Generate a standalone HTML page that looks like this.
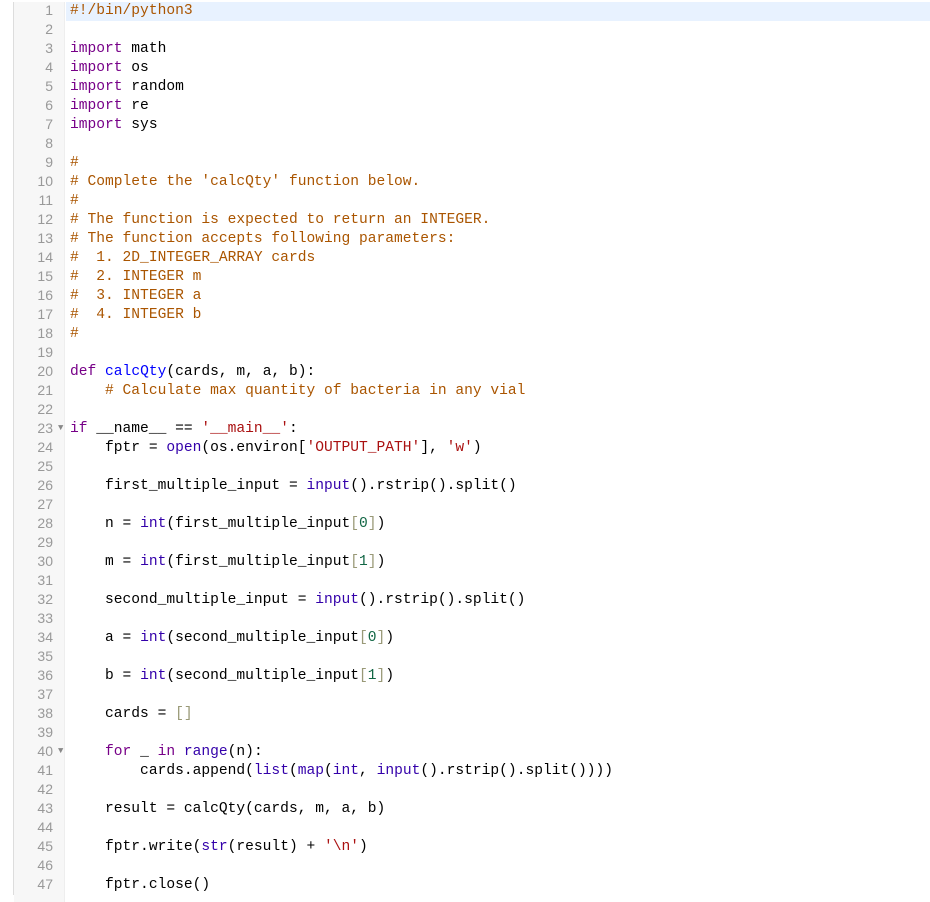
<!DOCTYPE html>
<html><head><style>
html,body{margin:0;padding:0;background:#fff;width:930px;height:899px;overflow:hidden}
.ed{position:absolute;left:13px;top:2px;right:0;border-left:1px solid #ddd}
.g{position:absolute;left:0;top:0;width:50px;background:#f7f7f7;height:900px;border-right:1px solid #eee}
.l{height:19px;line-height:19px;font-family:"Liberation Mono",monospace;font-size:14.6px;white-space:pre;position:relative}
.n{position:absolute;left:0;top:-1px;width:39px;text-align:right;color:#999;font-family:"Liberation Sans",sans-serif;font-size:14px;line-height:19px}
.c{position:absolute;left:56px;color:#000}
.hl{background:#e8f2ff;position:absolute;left:52px;right:0;top:0;height:19px}
.k{color:#708}.cm{color:#a50}.b{color:#30a}.d{color:#00f}.s{color:#a11}.nu{color:#164}.br{color:#997}
.ar{position:absolute;left:44px;top:-1px;color:#888;font-size:9px}
</style></head><body>
<div class="ed"><div class="g"></div>
<div class="l"><div class="hl"></div><span class="n">1</span><span class="c"><span class="cm">#!/bin/python3</span></span></div>
<div class="l"><span class="n">2</span></div>
<div class="l"><span class="n">3</span><span class="c"><span class="k">import</span> math</span></div>
<div class="l"><span class="n">4</span><span class="c"><span class="k">import</span> os</span></div>
<div class="l"><span class="n">5</span><span class="c"><span class="k">import</span> random</span></div>
<div class="l"><span class="n">6</span><span class="c"><span class="k">import</span> re</span></div>
<div class="l"><span class="n">7</span><span class="c"><span class="k">import</span> sys</span></div>
<div class="l"><span class="n">8</span></div>
<div class="l"><span class="n">9</span><span class="c cm">#</span></div>
<div class="l"><span class="n">10</span><span class="c cm"># Complete the 'calcQty' function below.</span></div>
<div class="l"><span class="n">11</span><span class="c cm">#</span></div>
<div class="l"><span class="n">12</span><span class="c cm"># The function is expected to return an INTEGER.</span></div>
<div class="l"><span class="n">13</span><span class="c cm"># The function accepts following parameters:</span></div>
<div class="l"><span class="n">14</span><span class="c cm">#  1. 2D_INTEGER_ARRAY cards</span></div>
<div class="l"><span class="n">15</span><span class="c cm">#  2. INTEGER m</span></div>
<div class="l"><span class="n">16</span><span class="c cm">#  3. INTEGER a</span></div>
<div class="l"><span class="n">17</span><span class="c cm">#  4. INTEGER b</span></div>
<div class="l"><span class="n">18</span><span class="c cm">#</span></div>
<div class="l"><span class="n">19</span></div>
<div class="l"><span class="n">20</span><span class="c"><span class="k">def</span> <span class="d">calcQty</span>(cards, m, a, b):</span></div>
<div class="l"><span class="n">21</span><span class="c">    <span class="cm"># Calculate max quantity of bacteria in any vial</span></span></div>
<div class="l"><span class="n">22</span></div>
<div class="l"><span class="n">23</span><span class="ar">▼</span><span class="c"><span class="k">if</span> __name__ == <span class="s">'__main__'</span>:</span></div>
<div class="l"><span class="n">24</span><span class="c">    fptr = <span class="b">open</span>(os.environ[<span class="s">'OUTPUT_PATH'</span>], <span class="s">'w'</span>)</span></div>
<div class="l"><span class="n">25</span></div>
<div class="l"><span class="n">26</span><span class="c">    first_multiple_input = <span class="b">input</span>().rstrip().split()</span></div>
<div class="l"><span class="n">27</span></div>
<div class="l"><span class="n">28</span><span class="c">    n = <span class="b">int</span>(first_multiple_input<span class="br">[</span><span class="nu">0</span><span class="br">]</span>)</span></div>
<div class="l"><span class="n">29</span></div>
<div class="l"><span class="n">30</span><span class="c">    m = <span class="b">int</span>(first_multiple_input<span class="br">[</span><span class="nu">1</span><span class="br">]</span>)</span></div>
<div class="l"><span class="n">31</span></div>
<div class="l"><span class="n">32</span><span class="c">    second_multiple_input = <span class="b">input</span>().rstrip().split()</span></div>
<div class="l"><span class="n">33</span></div>
<div class="l"><span class="n">34</span><span class="c">    a = <span class="b">int</span>(second_multiple_input<span class="br">[</span><span class="nu">0</span><span class="br">]</span>)</span></div>
<div class="l"><span class="n">35</span></div>
<div class="l"><span class="n">36</span><span class="c">    b = <span class="b">int</span>(second_multiple_input<span class="br">[</span><span class="nu">1</span><span class="br">]</span>)</span></div>
<div class="l"><span class="n">37</span></div>
<div class="l"><span class="n">38</span><span class="c">    cards = <span class="br">[]</span></span></div>
<div class="l"><span class="n">39</span></div>
<div class="l"><span class="n">40</span><span class="ar">▼</span><span class="c">    <span class="k">for</span> _ <span class="k">in</span> <span class="b">range</span>(n):</span></div>
<div class="l"><span class="n">41</span><span class="c">        cards.append(<span class="b">list</span>(<span class="b">map</span>(<span class="b">int</span>, <span class="b">input</span>().rstrip().split())))</span></div>
<div class="l"><span class="n">42</span></div>
<div class="l"><span class="n">43</span><span class="c">    result = calcQty(cards, m, a, b)</span></div>
<div class="l"><span class="n">44</span></div>
<div class="l"><span class="n">45</span><span class="c">    fptr.write(<span class="b">str</span>(result) + <span class="s">'\n'</span>)</span></div>
<div class="l"><span class="n">46</span></div>
<div class="l"><span class="n">47</span><span class="c">    fptr.close()</span></div>
</div>
</body></html>
